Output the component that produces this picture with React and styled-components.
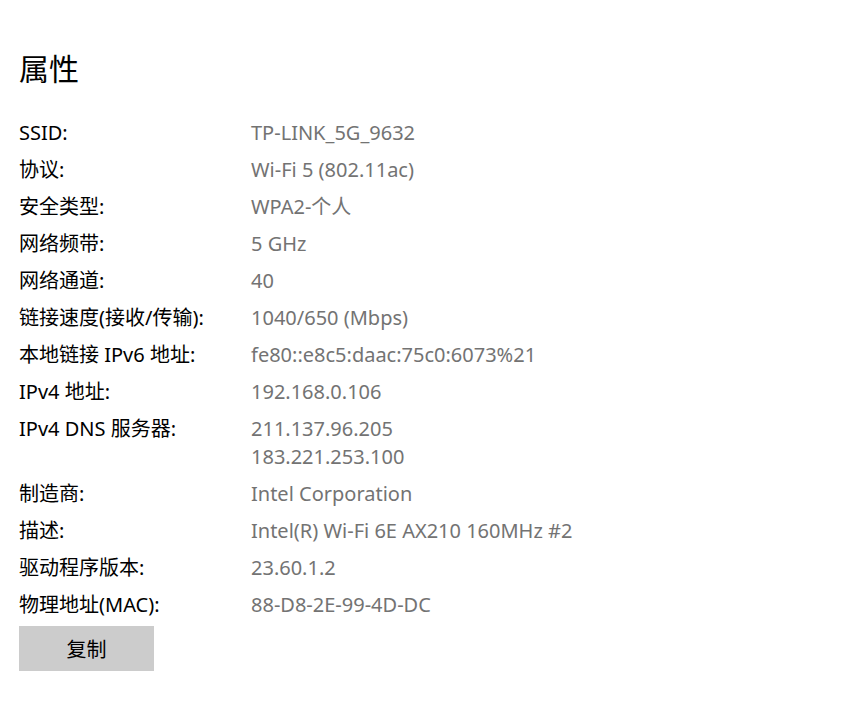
import React from "react";
import styled, { createGlobalStyle } from "styled-components";

const GlobalStyle = createGlobalStyle`
  body {
    margin: 0;
    background: #ffffff;
    font-family: "Noto Sans", "Noto Sans CJK SC", sans-serif;
  }
`;

const props = [
  { label: "SSID:", value: ["TP-LINK_5G_9632"] },
  { label: "协议:", value: ["Wi-Fi 5 (802.11ac)"] },
  { label: "安全类型:", value: ["WPA2-个人"] },
  { label: "网络频带:", value: ["5 GHz"] },
  { label: "网络通道:", value: ["40"] },
  { label: "链接速度(接收/传输):", value: ["1040/650 (Mbps)"] },
  { label: "本地链接 IPv6 地址:", value: ["fe80::e8c5:daac:75c0:6073%21"] },
  { label: "IPv4 地址:", value: ["192.168.0.106"] },
  { label: "IPv4 DNS 服务器:", value: ["211.137.96.205", "183.221.253.100"] },
  { label: "制造商:", value: ["Intel Corporation"] },
  { label: "描述:", value: ["Intel(R) Wi-Fi 6E AX210 160MHz #2"] },
  { label: "驱动程序版本:", value: ["23.60.1.2"] },
  { label: "物理地址(MAC):", value: ["88-D8-2E-99-4D-DC"] },
];

function App() {
  return (
    <Page>
      <GlobalStyle />
      <Title>属性</Title>
      <List>
        {props.map((p) => (
          <Row key={p.label}>
            <Label>{p.label}</Label>
            <Value>
              {p.value.map((v) => (
                <div key={v}>{v}</div>
              ))}
            </Value>
          </Row>
        ))}
      </List>
      <CopyButton>复制</CopyButton>
    </Page>
  );
}

export default App;

const Page = styled.div`
  padding: 49px 19px 40px;
`;

const Title = styled.h1`
  margin: 0;
  font-size: 30px;
  font-weight: 400;
  line-height: 40px;
  color: #000;
`;

const List = styled.div`
  margin-top: 30px;
  display: flex;
  flex-direction: column;
  gap: 9px;
`;

const Row = styled.div`
  display: grid;
  grid-template-columns: 232px 1fr;
  font-size: 20px;
  line-height: 28px;
  white-space: nowrap;
`;

const Label = styled.div`
  color: #000;
`;

const Value = styled.div`
  color: #737373;
`;

const CopyButton = styled.button`
  margin-top: 7px;
  width: 135px;
  height: 45px;
  border: none;
  background: #cccccc;
  font-family: "Noto Sans", "Noto Sans CJK SC", sans-serif;
  font-size: 20px;
  color: #000;
  padding: 0;
`;
